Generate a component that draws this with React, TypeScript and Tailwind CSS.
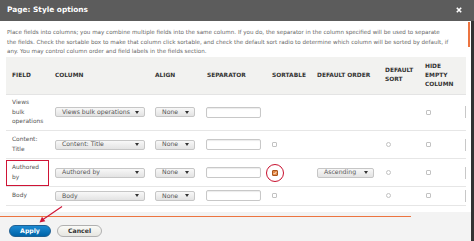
import React from "react";

const Sel = ({ text, w }: { text: string; w: string }) => (
  <div
    className={`${w} h-[10px] flex items-center justify-between pl-[6px] pr-[5px] rounded-[2px] border border-[#c6c6c6] bg-gradient-to-b from-[#f8f8f8] to-[#e3e3e3] text-[6.2px] leading-none text-[#555]`}
  >
    <span>{text}</span>
    <span className="w-0 h-0 border-l-[2px] border-r-[2px] border-t-[3px] border-l-transparent border-r-transparent border-t-[#333]" />
  </div>
);

const Box = () => (
  <div className="w-[5px] h-[5px] border border-[#c2c2c2] rounded-[1px] bg-white" />
);
const Radio = () => (
  <div className="w-[5px] h-[5px] border border-[#c2c2c2] rounded-full bg-white" />
);
const Input = () => (
  <div className="w-[55px] h-[11px] border border-[#c8c8c8] rounded-[2px] bg-white shadow-[inset_0_1px_1px_rgba(0,0,0,0.08)]" />
);

const cell = "pl-[6px] flex items-center";
const lbl = "text-[5.9px] leading-[9.5px] text-[#555]";
const gridCols =
  "grid grid-cols-[43px_100px_52px_65px_45px_68px_40px_46px_30px] w-max";

type Row = {
  label: React.ReactNode;
  col: string;
  sortable: boolean;
  checked?: boolean;
  order?: boolean;
  radio: boolean;
  boxed?: boolean;
  py: string;
};

const rows: Row[] = [
  {
    label: (
      <>
        Views
        <br />
        bulk
        <br />
        operations
      </>
    ),
    col: "Views bulk operations",
    sortable: false,
    radio: false,
    py: "py-[3.5px]",
  },
  {
    label: (
      <>
        Content:
        <br />
        Title
      </>
    ),
    col: "Content: Title",
    sortable: true,
    radio: true,
    py: "py-[4px]",
  },
  {
    label: (
      <>
        Authored
        <br />
        by
      </>
    ),
    col: "Authored by",
    sortable: true,
    checked: true,
    order: true,
    radio: true,
    boxed: true,
    py: "py-[4px]",
  },
  {
    label: <>Body</>,
    col: "Body",
    sortable: true,
    radio: true,
    py: "py-[4px]",
  },
];

export default function App() {
  return (
    <div className="relative w-[474px] h-[241px] overflow-hidden bg-[#333] font-['DejaVu_Sans',sans-serif]">
      {/* title bar */}
      <div className="h-[21px] w-full bg-[#5c5c5c] flex items-center justify-between pl-[7px] pr-[12px] pb-[2px]">
        <span className="text-white font-bold text-[7.4px] leading-none">
          Page: Style options
        </span>
        <svg width="6" height="6" viewBox="0 0 6 6" className="mt-[1px]">
          <path d="M0.8 0.8 L5.2 5.2 M5.2 0.8 L0.8 5.2" stroke="#fff" strokeWidth="1.6" />
        </svg>
      </div>

      <div className="flex">
        <div className="w-[471px] h-[220px] flex flex-col bg-white">
          {/* scroll area */}
          <div className="flex h-[191px]">
            <div className="w-[466px] overflow-hidden pl-[6px] pt-[7px]">
              <div className="text-[5.6px] leading-[9.5px] text-[#666] pl-[1px] whitespace-nowrap">
                <div>
                  Place fields into columns; you may combine multiple fields into the same column. If you do, the separator in the column specified will be used to separate
                </div>
                <div>
                  the fields. Check the sortable box to make that column click sortable, and check the default sort radio to determine which column will be sorted by default, if
                </div>
                <div>
                  any. You may control column order and field labels in the fields section.
                </div>
              </div>

              {/* header */}
              <div
                className={`${gridCols} h-[38px] bg-[#f2f2f0] border-b border-[#e4e4e4] text-[5.9px] leading-[9px] font-bold uppercase text-[#333]`}
              >
                <div className={cell}>Field</div>
                <div className={cell}>Column</div>
                <div className={cell}>Align</div>
                <div className={cell}>Separator</div>
                <div className={cell}>Sortable</div>
                <div className={cell}>Default order</div>
                <div className={cell}>
                  <span>
                    Default
                    <br />
                    sort
                  </span>
                </div>
                <div className={cell}>
                  <span>
                    Hide
                    <br />
                    empty
                    <br />
                    column
                  </span>
                </div>
                <div />
              </div>

              {rows.map((r, i) => (
                <div key={i} className={`${gridCols} border-b border-[#e6e6e6]`}>
                  <div className={`${cell} relative ${r.py}`}>
                    <span className={lbl}>{r.label}</span>
                    {r.boxed && (
                      <div className="absolute left-0 right-0 top-[1px] bottom-0 border-[1.5px] border-[#cf1436]" />
                    )}
                  </div>
                  <div className={cell}>
                    <Sel text={r.col} w="w-[90px]" />
                  </div>
                  <div className={cell}>
                    <Sel text="None" w="w-[40px]" />
                  </div>
                  <div className="pl-[5px] flex items-center h-full">
                    <div className="h-[14px] flex items-center">
                      <Input />
                    </div>
                  </div>
                  <div className={cell}>
                    {r.sortable &&
                      (r.checked ? (
                        <div className="relative">
                          <div className="w-[6px] h-[6px] rounded-[1px] border border-[#a8551f] bg-[#e58a45] flex items-center justify-center">
                            <svg width="4" height="4" viewBox="0 0 4 4">
                              <path d="M0.5 2 L1.6 3.1 L3.5 0.8" stroke="#fff" strokeWidth="0.8" fill="none" />
                            </svg>
                          </div>
                          <div className="absolute left-[-6px] top-[-6px] w-[18px] h-[18px] rounded-full border-[1.3px] border-[#c8102e]" />
                        </div>
                      ) : (
                        <Box />
                      ))}
                  </div>
                  <div className={cell}>
                    {r.order && <Sel text="Ascending" w="w-[57px]" />}
                  </div>
                  <div className={`${cell} pl-[7px]`}>{r.radio && <Radio />}</div>
                  <div className={`${cell} pl-[7px]`}>
                    <Box />
                  </div>
                  <div className="flex items-center">
                    <div className="h-[12px] w-[20px] border-l border-[#c8c8c8]" />
                  </div>
                </div>
              ))}
            </div>
            {/* vertical overlay scrollbar */}
            <div className="w-[5px] flex flex-col pt-[1px] pl-[2px] bg-white">
              <div className="w-[2px] h-[25px] bg-[#ec7440]" />
            </div>
          </div>

          {/* button pane */}
          <div className="relative flex-1 bg-[#f3f3f3] flex items-start gap-[6px] pl-[9px] pt-[13px]">
            <div className="absolute left-0 top-[3.5px] w-[411px] h-[1.5px] bg-[#ec7440]" />
            <div className="w-[42px] h-[12px] rounded-full border border-[#1f5f92] bg-gradient-to-b from-[#1b8ad3] to-[#0064a8] flex items-center justify-center text-white font-bold text-[6.2px] leading-none">
              Apply
            </div>
            <div className="w-[45px] h-[12px] rounded-full border border-[#b0b0b0] bg-gradient-to-b from-[#fafaf7] to-[#e6e6e1] flex items-center justify-center text-[#333] font-bold text-[6.2px] leading-none">
              Cancel
            </div>
          </div>
        </div>
        <div className="flex-1 bg-[#333]" />
      </div>

      {/* annotation arrow */}
      <svg
        className="absolute left-0 top-0 pointer-events-none"
        width="474"
        height="241"
        viewBox="0 0 474 241"
      >
        <line x1="62" y1="206.5" x2="43" y2="219.5" stroke="#cf1436" strokeWidth="1.1" />
        <path d="M39.5 222.5 L42 216.8 L45.3 221.3 Z" fill="#cf1436" />
      </svg>
    </div>
  );
}
